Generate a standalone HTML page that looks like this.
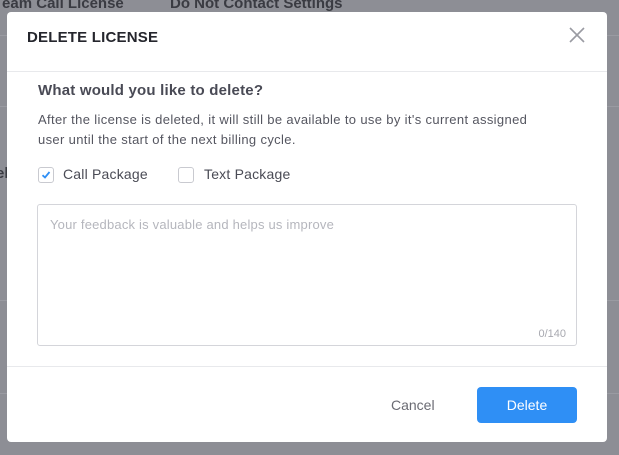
<!DOCTYPE html>
<html><head><style>
body{margin:0;width:619px;height:455px;overflow:hidden;background:#8d8e95;font-family:"Liberation Sans",sans-serif;position:relative}
.bgt{position:absolute;top:-5px;font-size:15px;font-weight:bold;color:#3a3b42}
.line{position:absolute;left:0;width:619px;height:1px;background:#9a9ba2}
.m{position:absolute;left:7px;top:12px;width:600px;height:430px;background:#fff;border-radius:4px}
.h{position:absolute;left:0;top:0;width:600px;height:59px;border-bottom:1px solid #e8e9ec}
.h span{position:absolute;left:20px;top:17px;font-size:15px;font-weight:bold;color:#25262d;letter-spacing:.2px}
.x{position:absolute;left:562px;top:15px}
.q{position:absolute;left:31px;top:70px;font-size:15px;font-weight:bold;color:#494a55;letter-spacing:.2px}
.p{position:absolute;left:31px;top:98px;width:500px;font-size:13px;line-height:20px;color:#555660;letter-spacing:.35px}
.cb{position:absolute;top:155px;width:14px;height:14px;border:1px solid #c9cad0;border-radius:3px}
.lb{position:absolute;top:154px;font-size:14px;color:#4a4b55;letter-spacing:.2px}
.ta{position:absolute;left:30px;top:192px;width:538px;height:140px;border:1px solid #d4d5da;border-radius:3px}
.ta .ph{position:absolute;left:12px;top:12px;font-size:13px;color:#b5b6bd;letter-spacing:.2px}
.ta .c{position:absolute;right:10px;bottom:5px;font-size:11px;color:#a8a9b0}
.f{position:absolute;left:0;top:354px;width:600px;border-top:1px solid #e8e9ec}
.cancel{position:absolute;left:384px;top:385px;font-size:14px;color:#6a6b73}
.btn{position:absolute;left:470px;top:375px;width:100px;height:36px;background:#2f8ff5;border-radius:4px;color:#fff;font-size:14px;text-align:center;line-height:36px}
</style></head><body>
<div class="bgt" style="left:-6px">Team Call License</div>
<div class="bgt" style="left:170px">Do Not Contact Settings</div>
<div class="line" style="top:35px"></div>
<div class="line" style="top:106px"></div>
<div class="line" style="top:300px"></div>
<div class="line" style="top:393px"></div>
<div class="bgt" style="left:-4px;top:165px">el</div>
<div class="m">
<div class="h"><span>DELETE LICENSE</span>
<svg class="x" width="16" height="16" viewBox="0 0 16 16"><path d="M1 1L15 15M15 1L1 15" stroke="#9a9ba2" stroke-width="1.6"/></svg></div>
<div class="q">What would you like to delete?</div>
<div class="p">After the license is deleted, it will still be available to use by it's current assigned<br>user until the start of the next billing cycle.</div>
<div class="cb" style="left:31px"><svg width="14" height="14" viewBox="0 0 14 14"><path d="M3.5 7.2L6 9.5L10.5 4" fill="none" stroke="#2f8ff5" stroke-width="1.8"/></svg></div>
<div class="lb" style="left:56px">Call Package</div>
<div class="cb" style="left:171px"></div>
<div class="lb" style="left:197px">Text Package</div>
<div class="ta"><div class="ph">Your feedback is valuable and helps us improve</div><div class="c">0/140</div></div>
<div class="f"></div>
<div class="cancel">Cancel</div>
<div class="btn">Delete</div>
</div>
</body></html>
